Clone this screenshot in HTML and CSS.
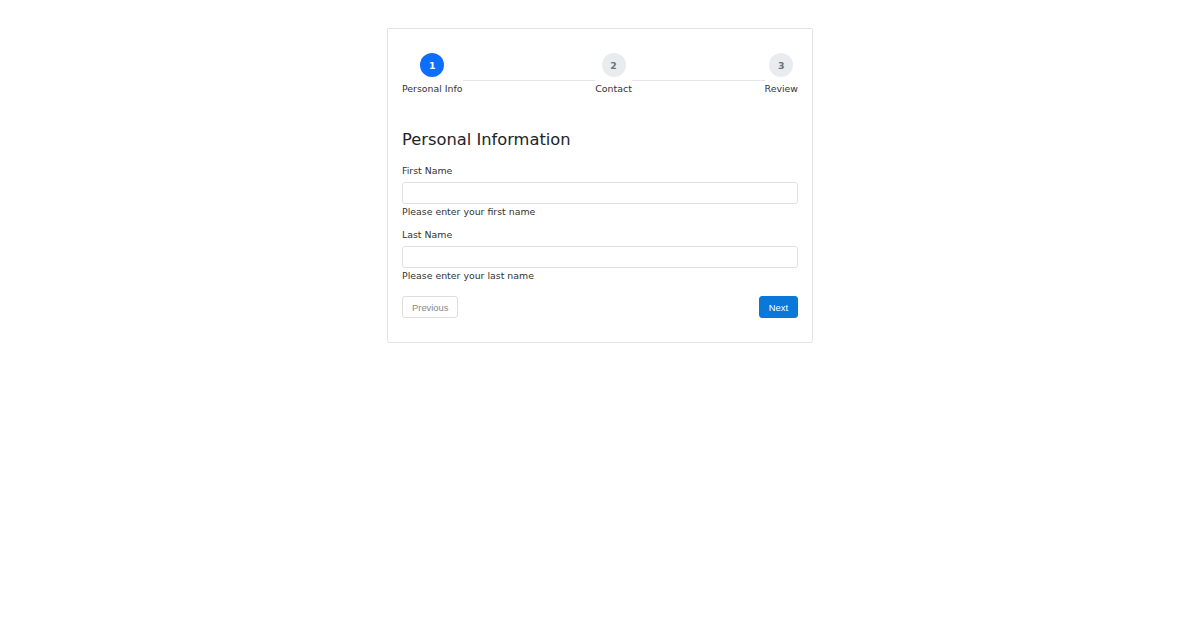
FILE: index.html
```html
<!DOCTYPE html>
<html>
<head>
<meta charset="utf-8">
<link rel="stylesheet" href="styles.css">
</head>
<body>
<div class="card">
  <div class="stepper">
    <div class="step active">
      <div class="circle">1</div>
      <div class="step-label">Personal Info</div>
    </div>
    <div class="line"></div>
    <div class="step">
      <div class="circle">2</div>
      <div class="step-label">Contact</div>
    </div>
    <div class="line"></div>
    <div class="step">
      <div class="circle">3</div>
      <div class="step-label">Review</div>
    </div>
  </div>
  <h2 class="title">Personal Information</h2>
  <div class="field">
    <label class="label">First Name</label>
    <input class="input" type="text">
    <div class="help">Please enter your first name</div>
  </div>
  <div class="field">
    <label class="label">Last Name</label>
    <input class="input" type="text">
    <div class="help">Please enter your last name</div>
  </div>
  <div class="actions">
    <button class="btn btn-prev">Previous</button>
    <button class="btn btn-next">Next</button>
  </div>
</div>
</body>
</html>
```
FILE: styles.css
```css
html, body {
  margin: 0;
  padding: 0;
  background: #fff;
}
body {
  padding-top: 28px;
  font-family: "DejaVu Sans", sans-serif;
  color: #212529;
}
.card {
  width: 396px;
  margin: 0 auto;
  padding: 24px 14px;
  border: 1px solid #e4e4e4;
  border-radius: 2px;
}
.stepper {
  display: flex;
  align-items: flex-start;
}
.step {
  display: flex;
  flex-direction: column;
  align-items: center;
}
.circle {
  width: 24px;
  height: 24px;
  border-radius: 50%;
  background: #e9ecef;
  color: #6c757d;
  font-size: 9.4px;
  font-weight: bold;
  display: flex;
  align-items: center;
  justify-content: center;
}
.step.active .circle {
  background: #0d6efd;
  color: #fff;
}
.step-label {
  margin-top: 6px;
  font-size: 9.4px;
  line-height: 12px;
  color: #333;
}
.line {
  flex: 1;
  height: 1px;
  background: #e2e5e8;
  margin-top: 27px;
}
.title {
  margin: 34px 0 14px;
  font-size: 16.3px;
  font-weight: normal;
  line-height: 22px;
  color: #212529;
}
.field {
  margin-bottom: 10px;
}
.label {
  display: block;
  font-size: 9.4px;
  line-height: 12px;
  color: #333;
  margin-bottom: 5px;
}
.input {
  display: block;
  box-sizing: border-box;
  width: 100%;
  height: 22px;
  margin: 0;
  border: 1px solid #e0e0e0;
  border-radius: 3px;
  background: #fff;
  outline: none;
}
.help {
  margin-top: 1px;
  font-size: 9.4px;
  line-height: 14px;
  color: #333;
}
.actions {
  display: flex;
  justify-content: space-between;
  margin-top: 13px;
}
.btn {
  font-family: "Liberation Sans", Arial, sans-serif;
  font-size: 9.4px;
  height: 22px;
  padding: 0 9px;
  border-radius: 3px;
  cursor: pointer;
}
.btn-prev {
  background: #fff;
  border: 1px solid #ddd;
  color: #888;
}
.btn-next {
  background: #0a78d8;
  border: 1px solid #0a78d8;
  color: #fff;
}
```
